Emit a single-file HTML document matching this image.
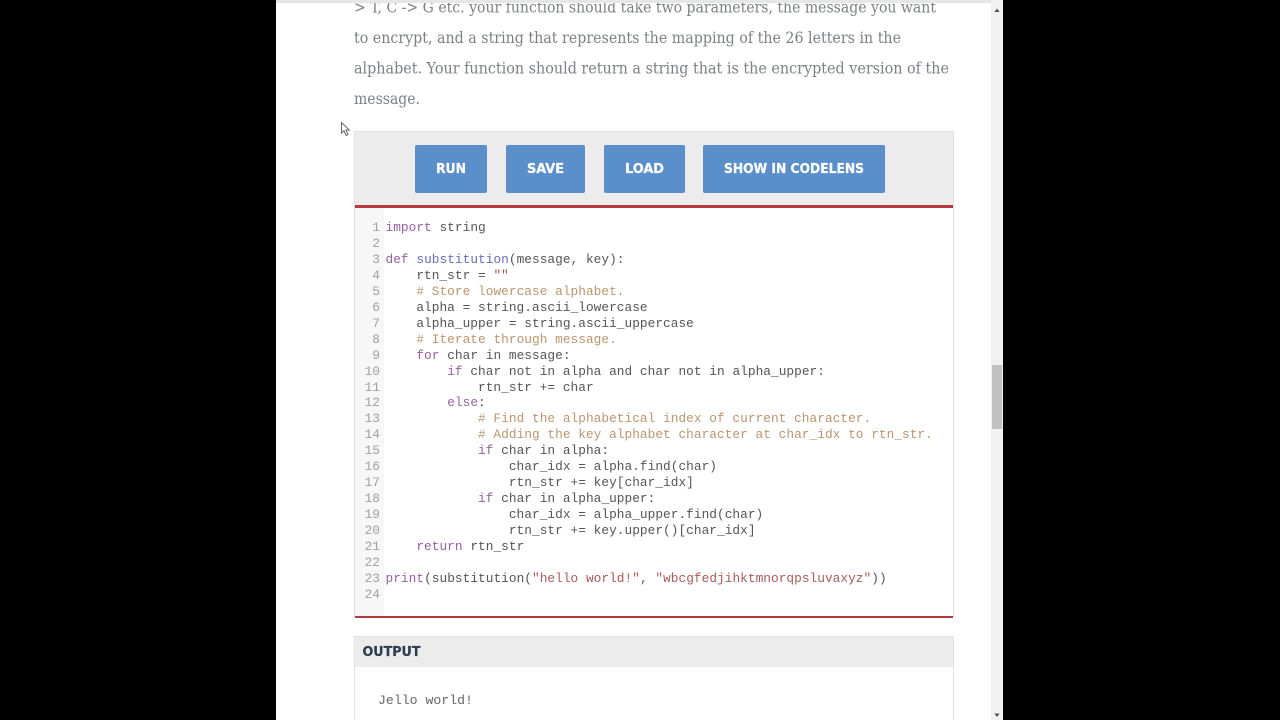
<!DOCTYPE html>
<html lang="en"><head><meta charset="utf-8"><title>Substitution</title>
<style>
html,body{margin:0;padding:0;width:1280px;height:720px;overflow:hidden;background:#000}
.a{position:absolute}
#page{left:276px;top:0;width:715px;height:720px;background:#fff;overflow:hidden}
svg{position:absolute;left:0;top:0;filter:blur(.35px)}
.p{font-family:"DejaVu Serif","Liberation Serif",serif;font-size:15.8px;fill:#7c8086}
.b{font-family:"DejaVu Sans","Liberation Sans",sans-serif;font-weight:700;font-size:13px;fill:#fff;stroke:#fff;stroke-width:.25px}
.btn{position:absolute;top:145px;height:48px;background:#5b8fcb;border-radius:2px}
pre{margin:0;font-family:"Liberation Mono",monospace;font-size:12.8px;line-height:15.96px;letter-spacing:.03px;color:#555;filter:blur(.35px)}
.k{color:#96609f}.f{color:#6570b5}.s{color:#a85a5a}.c{color:#b8966e}
</style></head><body>
<div class="a" id="page" style="left:276px"></div>
<div class="a" style="left:991px;top:0;width:12px;height:720px;background:#f1f1f1"></div>
<div class="a" style="left:992px;top:365px;width:10px;height:64px;background:#c1c1c1"></div>

<div class="a" style="left:354px;top:131px;width:598px;height:74px;background:#ececec;border:1px solid #e2e2e2;border-bottom:0"></div>
<div class="btn" style="left:415px;width:72px"></div>
<div class="btn" style="left:506px;width:79px"></div>
<div class="btn" style="left:604px;width:81px"></div>
<div class="btn" style="left:703px;width:182px"></div>

<div class="a" style="left:354px;top:205px;width:600px;height:413px;background:#fff;box-sizing:border-box;border-left:1px solid #ddd;border-right:1px solid #ddd"></div>
<div class="a" style="left:355px;top:208px;width:29px;height:408px;background:#f7f7f7"></div>
<div class="a" style="left:355px;top:205px;width:598px;height:3px;background:#b53a3e"></div>
<div class="a" style="left:355px;top:616px;width:598px;height:2px;background:#b53a3e"></div>

<pre class="a" style="left:355px;top:220px;width:25px;text-align:right;color:#a0a0a0">1
2
3
4
5
6
7
8
9
10
11
12
13
14
15
16
17
18
19
20
21
22
23
24</pre>
<pre class="a" style="left:385.5px;top:220px"><span class="k">import</span> string

<span class="k">def</span> <span class="f">substitution</span>(message, key):
    rtn_str = <span class="s">""</span>
    <span class="c"># Store lowercase alphabet.</span>
    alpha = string.ascii_lowercase
    alpha_upper = string.ascii_uppercase
    <span class="c"># Iterate through message.</span>
    <span class="k">for</span> char in message:
        <span class="k">if</span> char not in alpha and char not in alpha_upper:
            rtn_str += char
        <span class="k">else</span>:
            <span class="c"># Find the alphabetical index of current character.</span>
            <span class="c"># Adding the key alphabet character at char_idx to rtn_str.</span>
            <span class="k">if</span> char in alpha:
                char_idx = alpha.find(char)
                rtn_str += key[char_idx]
            <span class="k">if</span> char in alpha_upper:
                char_idx = alpha_upper.find(char)
                rtn_str += key.upper()[char_idx]
    <span class="k">return</span> rtn_str

<span class="k">print</span>(substitution(<span class="s">"hello world!"</span>, <span class="s">"wbcgfedjihktmnorqpsluvaxyz"</span>))
</pre>

<div class="a" style="left:354px;top:636px;width:600px;height:84px;background:#fff;box-sizing:border-box;border:1px solid #e2e2e2;border-bottom:0"></div>
<div class="a" style="left:355px;top:637px;width:598px;height:30px;background:#ececec"></div>
<pre class="a" style="left:378px;top:693px;font-size:13.2px;line-height:16px;letter-spacing:0;color:#666">Jello world!</pre>

<svg width="1280" height="720" viewBox="0 0 1280 720">
<text class="p" x="354" y="12.500" textLength="582" lengthAdjust="spacingAndGlyphs">&gt; T, C -&gt; G etc. your function should take two parameters, the message you want</text>
<text class="p" x="354" y="43" textLength="547" lengthAdjust="spacingAndGlyphs">to encrypt, and a string that represents the mapping of the 26 letters in the</text>
<text class="p" x="354" y="73.500" textLength="595" lengthAdjust="spacingAndGlyphs">alphabet. Your function should return a string that is the encrypted version of the</text>
<text class="p" x="354" y="104" textLength="66" lengthAdjust="spacingAndGlyphs">message.</text>
<text class="b" x="436" y="173" textLength="30" lengthAdjust="spacingAndGlyphs">RUN</text>
<text class="b" x="527" y="173" textLength="37" lengthAdjust="spacingAndGlyphs">SAVE</text>
<text class="b" x="625" y="173" textLength="39" lengthAdjust="spacingAndGlyphs">LOAD</text>
<text class="b" x="724" y="173" textLength="140" lengthAdjust="spacingAndGlyphs">SHOW IN CODELENS</text>
<text class="b" x="362.500" y="656" textLength="58" lengthAdjust="spacingAndGlyphs" style="fill:#2d3e50;stroke:#2d3e50">OUTPUT</text>
<path d="M341.500 122.500V133l2.500-2.300 2 4.800 2-.9-2-4.600h3.300z" fill="#fff" stroke="#666" stroke-width="1"/>
<path d="M994.500 12l2.500-3.500 2.500 3.500z" fill="#505050"/>
<path d="M994.500 713.500l2.500 3.500 2.500-3.500z" fill="#505050"/>
</svg>
<div class="a" style="left:276px;top:0;width:715px;height:3px;background:#e6e6e6"></div>
<div class="a" style="left:991px;top:0;width:12px;height:3px;background:#f1f1f1"></div>
</body></html>
